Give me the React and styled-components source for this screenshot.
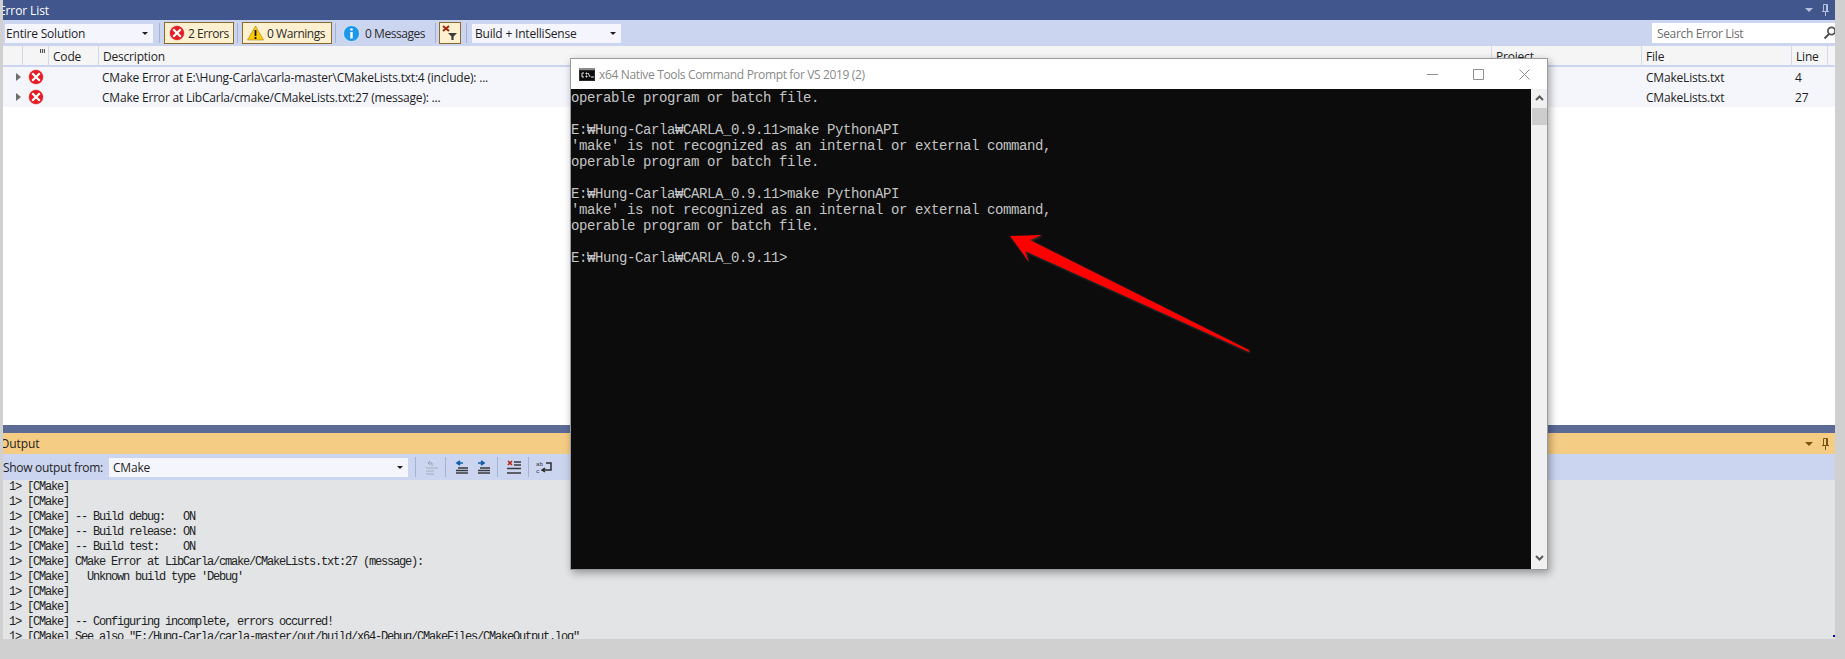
import styled, { createGlobalStyle } from 'styled-components'

const GlobalStyle = createGlobalStyle`
  html, body {
    margin: 0;
    padding: 0;
    background: #d0d0d0;
    overflow: hidden;
  }
`

const UI_FONT = `"Open Sans", "Noto Sans", sans-serif`

const Frame = styled.div`
  position: relative;
  width: 1845px;
  height: 659px;
  box-sizing: border-box;
  padding: 0 10px 20px 3px;
  background: #d0d0d0;
  display: flex;
  flex-direction: column;
  overflow: hidden;
  font-family: ${UI_FONT};
  font-size: 12px;
  color: #1e1e1e;
`

const Panel = styled.section`
  display: flex;
  flex-direction: column;
  height: ${p => p.$height}px;
  overflow: hidden;
`

const PanelTitle = styled.div`
  flex: none;
  height: ${p => p.$height}px;
  display: flex;
  align-items: center;
  justify-content: space-between;
  overflow: hidden;
  background: ${p => (p.$active ? '#f5cc84' : '#40568d')};
  color: ${p => (p.$active ? '#1e1e1e' : '#ffffff')};
  font-size: 12px;
  letter-spacing: -0.1px;
  .name {
    margin-left: ${p => (p.$active ? -3 : -4)}px;
  }
`

const TitleIcons = styled.div`
  display: flex;
  align-items: center;
  gap: 9px;
  margin-right: 6px;
`

const Splitter = styled.div`
  flex: none;
  height: 8px;
  background: #5c6b96;
`

const Toolbar = styled.div`
  flex: none;
  height: 26px;
  display: flex;
  align-items: center;
  background: #ccd5f0;
  white-space: nowrap;
`

const Combo = styled.div`
  flex: none;
  box-sizing: border-box;
  width: ${p => p.$width}px;
  height: 19px;
  margin-left: ${p => p.$left || 0}px;
  padding: 0 5px 0 ${p => p.$pad ?? 3}px;
  display: flex;
  align-items: center;
  justify-content: space-between;
  background: #f5f6fd;
  letter-spacing: -0.2px;
  &::after {
    content: '';
    border-style: solid;
    border-width: 3px 3px 0 3px;
    border-color: #1e1e1e transparent transparent transparent;
  }
`

const Sep = styled.span`
  flex: none;
  width: 1px;
  height: 20px;
  margin: 0 ${p => p.$r}px 0 ${p => p.$l}px;
  background: #a4b1d0;
`

const ToggleButton = styled.div`
  flex: none;
  box-sizing: border-box;
  width: ${p => p.$width}px;
  height: 22px;
  display: flex;
  align-items: center;
  gap: ${p => p.$gap ?? 5}px;
  padding-left: ${p => p.$pad ?? 4}px;
  border: 1px solid ${p => (p.$on ? '#8c6a2e' : 'transparent')};
  background: ${p => (p.$on ? '#fff0d0' : 'transparent')};
  letter-spacing: -0.45px;
  color: #2c2c2c;
`

const SearchBox = styled.div`
  flex: none;
  box-sizing: border-box;
  width: 183px;
  height: 20px;
  margin-left: auto;
  display: flex;
  align-items: center;
  justify-content: space-between;
  padding-left: 5px;
  overflow: hidden;
  background: #ffffff;
  color: #6d6d6d;
  letter-spacing: -0.35px;
`

const TableRow = styled.div`
  flex: none;
  display: grid;
  grid-template-columns: 20px 26px 50px 1393px 150px 150px 36px 1fr;
  height: ${p => p.$height}px;
  align-items: center;
  letter-spacing: -0.2px;
  background: ${p => p.$bg};
`

const HeaderCell = styled.div`
  box-sizing: border-box;
  height: 100%;
  padding: 1px 0 0 4px;
  display: flex;
  align-items: center;
  position: relative;
  border-right: 1px solid ${p => (p.$last ? 'transparent' : '#d5d9e6')};
  border-bottom: 2px solid #ccd5f0;
  background: #f5f5f5;
`

const SortMark = styled.span`
  position: absolute;
  right: 3px;
  top: 3px;
  width: 5px;
  height: 4px;
  background: repeating-linear-gradient(90deg, #555 0 1px, #ddd 1px 2px);
`

const Cell = styled.div`
  padding-left: ${p => p.$pad ?? 4}px;
  display: flex;
  align-items: center;
`

const Expander = styled.span`
  width: 0;
  height: 0;
  margin-left: 13px;
  border-style: solid;
  border-width: 4px 0 4px 5px;
  border-color: transparent transparent transparent #6e6e6e;
`

const ListFill = styled.div`
  flex: 1;
  background: #ffffff;
`

const OutputLabel = styled.div`
  flex: none;
  width: 106px;
  letter-spacing: -0.3px;
`

const ToolIcon = styled.svg`
  flex: none;
  display: block;
  margin: 0 ${p => p.$r || 0}px 0 ${p => p.$l || 0}px;
`

const OutputBody = styled.div`
  flex: 1;
  overflow: hidden;
  padding-left: 6px;
  background: #e3e4e6;
  font-family: "Liberation Mono", monospace;
  font-size: 12px;
  letter-spacing: -1.2px;
  line-height: 15px;
  color: #222;
  white-space: pre;
`

const Marker = styled.span`
  position: absolute;
  left: 1833px;
  top: 635px;
  width: 2px;
  height: 2px;
  background: #0000d0;
`

// the cmd window floats over the ide panes
const ConsoleWindow = styled.div`
  position: absolute;
  left: 570px;
  top: 58px;
  width: 978px;
  height: 512px;
  box-sizing: border-box;
  border: 1px solid #9b9b9b;
  display: flex;
  flex-direction: column;
  background: #fff;
  box-shadow: 2px 3px 8px rgba(0, 0, 0, 0.35);
`

const WindowBar = styled.div`
  flex: none;
  height: 30px;
  display: flex;
  align-items: center;
  padding-left: 8px;
  gap: 4px;
  background: #fff;
  color: #8a8a8a;
  letter-spacing: -0.35px;
`

const WindowButtons = styled.div`
  margin-left: auto;
  margin-right: 17px;
  display: flex;
  align-items: center;
  gap: 35px;
`

const ConsoleArea = styled.div`
  flex: 1;
  display: flex;
  min-height: 0;
`

const ConsoleText = styled.div`
  flex: 1;
  padding-top: 1px;
  background: #0c0c0c;
  color: #c4c4c4;
  font-family: "Liberation Mono", monospace;
  font-size: 14px;
  letter-spacing: -0.4px;
  line-height: 16px;
  white-space: pre;
`

const ScrollBar = styled.div`
  flex: none;
  width: 16px;
  display: flex;
  flex-direction: column;
  align-items: center;
  background: #f0f0f0;
  padding-top: 6px;
  box-sizing: border-box;
`

const ScrollThumb = styled.div`
  width: 15px;
  height: 17px;
  margin-top: 7px;
  background: #cdcdcd;
`

const ScrollDown = styled.div`
  margin-top: auto;
  margin-bottom: 4px;
`

const ArrowLayer = styled.svg`
  position: absolute;
  left: 0;
  top: 0;
  width: 1845px;
  height: 659px;
  pointer-events: none;
`

const ErrorIcon = ({ size = 16 }) => (
  <svg width={size} height={size} viewBox="0 0 16 16">
    <circle cx="8" cy="8" r="7.5" fill="#e51c23" stroke="#fff" strokeWidth="0.6" />
    <path d="M5 5l6 6M11 5l-6 6" stroke="#fff" strokeWidth="2.2" strokeLinecap="square" />
  </svg>
)

const WarningIcon = () => (
  <svg width="17" height="16" viewBox="0 0 17 16">
    <path d="M8.5 1L16.5 15H.5z" fill="#ffcc00" stroke="#8a6d10" strokeWidth="0.5" />
    <path d="M8.5 5v6M8.5 12v2" stroke="#111" strokeWidth="1.8" />
  </svg>
)

const InfoIcon = () => (
  <svg width="17" height="17" viewBox="0 0 17 17">
    <circle cx="8.5" cy="8.5" r="8" fill="#1c97ea" stroke="#fff" strokeWidth="0.6" />
    <path d="M8.5 3.5v2M8.5 7v6.5" stroke="#fff" strokeWidth="2.4" />
  </svg>
)

const FilterIcon = () => (
  <svg width="16" height="16" viewBox="0 0 16 16">
    <path d="M1 1l6 5M7 1L1 6" stroke="#a1260d" strokeWidth="2" />
    <path d="M6 8h9l-3.4 3.4V15H9.4v-3.6z" fill="#3c3c3c" />
  </svg>
)

const MagnifierIcon = () => (
  <svg width="12" height="14" viewBox="0 0 12 14">
    <circle cx="8.5" cy="5" r="3.6" fill="none" stroke="#555" strokeWidth="1.8" />
    <path d="M6 8l-4.5 4.5" stroke="#555" strokeWidth="2.2" />
  </svg>
)

const DropIcon = ({ color }) => (
  <svg width="8" height="4" viewBox="0 0 8 4">
    <path d="M0 0h8L4 4z" fill={color} />
  </svg>
)

const PinIcon = ({ color }) => (
  <svg width="7" height="12" viewBox="0 0 7 12">
    <path d="M1.5.5h4v7h-4zM0 7.5h7M3.5 7.5V12M4.5 1v6" fill="none" stroke={color} />
  </svg>
)

const WindowGlyph = ({ d }) => (
  <svg width="11" height="11" viewBox="0 0 11 11">
    <path d={d} fill="none" stroke="#8f8f8f" />
  </svg>
)

const CmdIcon = () => (
  <svg width="16" height="13" viewBox="0 0 16 13">
    <rect width="16" height="13" fill="#2a2a2a" />
    <rect x="0" y="0" width="16" height="2" fill="#8a8a8a" />
    <rect x="1" y="3" width="14" height="9" fill="#0c0c0c" />
    <path d="M5 5H3v4h2M7 5h1v1H7zM7 8h1v1H7zM9 5l2 4M12 9h3" stroke="#e8e8e8" fill="none" />
  </svg>
)

const ScrollChevron = ({ down }) => (
  <svg width="9" height="6" viewBox="0 0 9 6">
    <path d={down ? 'M1 1l3.5 3.5L8 1' : 'M1 5l3.5-3.5L8 5'} fill="none" stroke="#5a5a5a" strokeWidth="2" />
  </svg>
)

const UndoLinesIcon = () => (
  <ToolIcon width="14" height="16" viewBox="0 0 14 16" $l={9} $r={6}>
    <path d="M5 2L3 4l2 2M3 4h4v3" fill="none" stroke="#9aa3b5" />
    <path d="M1 9h12M1 12h8M1 15h8" stroke="#a6adbd" />
  </ToolIcon>
)

const IndentIcon = ({ flip, l, r }) => (
  <ToolIcon width="14" height="14" viewBox="0 0 14 14" $l={l} $r={r}>
    <path d={flip ? 'M1 3h5M4 1l3 2-3 2' : 'M8 3H3M5 1L2 3l3 2'} fill="none" stroke="#0e5ea8" strokeWidth="1.6" />
    <path d="M3 8h10M1 10.5h12M1 13h12" stroke="#3a3a3a" strokeWidth="1.3" />
  </ToolIcon>
)

const ClearIcon = () => (
  <ToolIcon width="14" height="15" viewBox="0 0 14 15" $l={9} $r={7}>
    <path d="M1 1l4 4M5 1L1 5" stroke="#b3261e" strokeWidth="1.6" />
    <path d="M7 2h7M7 5h7M0 8.5h14M0 13h14" stroke="#3a3a3a" strokeWidth="1.6" />
  </ToolIcon>
)

const WrapIcon = () => (
  <ToolIcon width="16" height="14" viewBox="0 0 16 14" $l={7}>
    <text x="0" y="6" fontSize="6" fontFamily="Liberation Mono" fill="#333">ab</text>
    <text x="0" y="13" fontSize="6" fontFamily="Liberation Mono" fill="#333">c</text>
    <path d="M10 3h5v7H7M9 8l-3 2 3 2" fill="none" stroke="#2c2c2c" strokeWidth="1.5" />
  </ToolIcon>
)

const errors = [
  { text: 'CMake Error at E:\\Hung-Carla\\carla-master\\CMakeLists.txt:4 (include): ...', line: 4 },
  { text: 'CMake Error at LibCarla/cmake/CMakeLists.txt:27 (message): ...', line: 27 },
]

const outputLines = [
  '1> [CMake]',
  '1> [CMake]',
  '1> [CMake] -- Build debug:   ON',
  '1> [CMake] -- Build release: ON',
  '1> [CMake] -- Build test:    ON',
  '1> [CMake] CMake Error at LibCarla/cmake/CMakeLists.txt:27 (message):',
  "1> [CMake]   Unknown build type 'Debug'",
  '1> [CMake]',
  '1> [CMake]',
  '1> [CMake] -- Configuring incomplete, errors occurred!',
  '1> [CMake] See also "E:/Hung-Carla/carla-master/out/build/x64-Debug/CMakeFiles/CMakeOutput.log"',
]

const consoleLines = [
  'operable program or batch file.',
  '',
  'E:₩Hung-Carla₩CARLA_0.9.11>make PythonAPI',
  "'make' is not recognized as an internal or external command,",
  'operable program or batch file.',
  '',
  'E:₩Hung-Carla₩CARLA_0.9.11>make PythonAPI',
  "'make' is not recognized as an internal or external command,",
  'operable program or batch file.',
  '',
  'E:₩Hung-Carla₩CARLA_0.9.11>',
]

const App = () => {
  return (
    <Frame>
      <GlobalStyle />

      <Panel $height={425}>
        <PanelTitle $height={20}>
          <span className="name">Error List</span>
          <TitleIcons>
            <DropIcon color="#b5c0dd" />
            <PinIcon color="#b5c0dd" />
          </TitleIcons>
        </PanelTitle>
        <Toolbar>
          <Combo $width={148} $left={2} $pad={1}>Entire Solution</Combo>
          <Sep $l={6} $r={4} />
          <ToggleButton $on $width={70} $gap={3}><ErrorIcon />2 Errors</ToggleButton>
          <Sep $l={3} $r={4} />
          <ToggleButton $on $width={90} $gap={3}><WarningIcon />0 Warnings</ToggleButton>
          <Sep $l={3} $r={4} />
          <ToggleButton $width={94} $pad={2}><InfoIcon />0 Messages</ToggleButton>
          <Sep $l={1} $r={3} />
          <ToggleButton $on $width={22} $pad={2}><FilterIcon /></ToggleButton>
          <Sep $l={5} $r={5} />
          <Combo $width={149}>Build + IntelliSense</Combo>
          <SearchBox>Search Error List<MagnifierIcon /></SearchBox>
        </Toolbar>
        <TableRow $height={21} $bg="#f5f5f5">
          <HeaderCell />
          <HeaderCell><SortMark /></HeaderCell>
          <HeaderCell>Code</HeaderCell>
          <HeaderCell>Description</HeaderCell>
          <HeaderCell>Project</HeaderCell>
          <HeaderCell>File</HeaderCell>
          <HeaderCell>Line</HeaderCell>
          <HeaderCell $last />
        </TableRow>
        {errors.map(row => (
          <TableRow key={row.line} $height={20} $bg="#f5f6fc">
            <Expander />
            <Cell $pad={5}><ErrorIcon /></Cell>
            <Cell />
            <Cell $pad={3}>{row.text}</Cell>
            <Cell />
            <Cell>CMakeLists.txt</Cell>
            <Cell $pad={3}>{row.line}</Cell>
            <Cell />
          </TableRow>
        ))}
        <ListFill />
      </Panel>

      <Splitter />

      <Panel $height={206}>
        <PanelTitle $active $height={21}>
          <span className="name">Output</span>
          <TitleIcons>
            <DropIcon color="#7a5410" />
            <PinIcon color="#7a5410" />
          </TitleIcons>
        </PanelTitle>
        <Toolbar>
          <OutputLabel>Show output from:</OutputLabel>
          <Combo $width={299} $pad={4}>CMake</Combo>
          <Sep $l={7} $r={0} />
          <UndoLinesIcon />
          <Sep $l={0} $r={0} />
          <IndentIcon l={9} r={8} />
          <IndentIcon flip l={0} r={6} />
          <Sep $l={0} $r={0} />
          <ClearIcon />
          <Sep $l={0} $r={0} />
          <WrapIcon />
        </Toolbar>
        <OutputBody>
          {outputLines.map((line, i) => (
            <div key={i}>{line}</div>
          ))}
        </OutputBody>
      </Panel>

      <Marker />

      <ConsoleWindow>
        <WindowBar>
          <CmdIcon />
          x64 Native Tools Command Prompt for VS 2019 (2)
          <WindowButtons>
            <WindowGlyph d="M0 5.5h11" />
            <WindowGlyph d="M.5.5h10v10H.5z" />
            <WindowGlyph d="M.5.5l10 10M10.5.5l-10 10" />
          </WindowButtons>
        </WindowBar>
        <ConsoleArea>
          <ConsoleText>
            {consoleLines.map((line, i) => (
              <div key={i}>{line || ' '}</div>
            ))}
          </ConsoleText>
          <ScrollBar>
            <ScrollChevron />
            <ScrollThumb />
            <ScrollDown><ScrollChevron down /></ScrollDown>
          </ScrollBar>
        </ConsoleArea>
      </ConsoleWindow>

      <ArrowLayer viewBox="0 0 1845 659">
        <path
          d="M1010 236L1042 235L1030 240L1249 350L1249 352L1025 251L1029 262Z"
          fill="#ff0000"
          style={{ filter: 'drop-shadow(1px 1px 1px rgba(90,90,90,0.6))' }}
        />
      </ArrowLayer>
    </Frame>
  )
}

export default App
